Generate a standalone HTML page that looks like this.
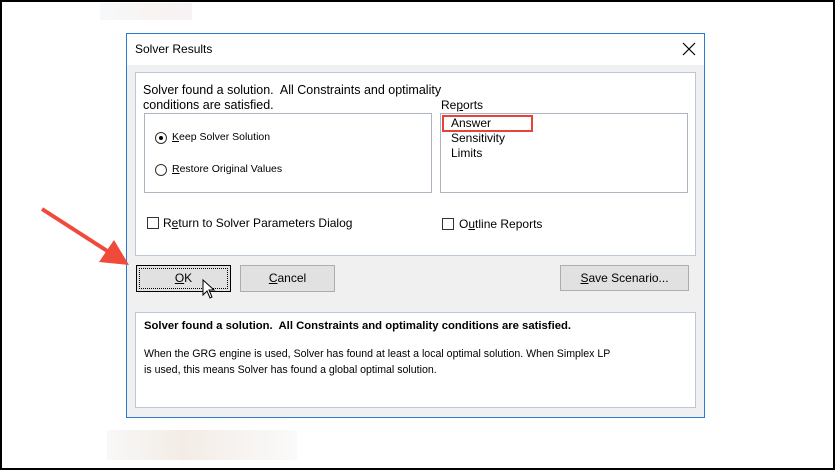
<!DOCTYPE html>
<html><head><style>
*{margin:0;padding:0;box-sizing:border-box}
body{width:835px;height:470px;background:#fff;position:relative;overflow:hidden;font-family:"Liberation Sans",sans-serif;font-size:11.5px;color:#000}
.a{position:absolute}
.frame{left:0;top:0;width:835px;height:470px;border:2px solid #000;border-left-width:2px}
.dlg{left:126px;top:33px;width:579px;height:385px;border:1px solid #2b79d0;background:#f0f0f0}
.title{left:0;top:0;width:577px;height:31px;background:#fff}
.panel{background:#fff;border:1px solid #b9c7d6}
.box{border:1px solid #adb6c0;background:#fff}
.btn{background:#e1e1e1;border:1px solid #adadad;text-align:center;line-height:25px;font-size:12px}
.cb{width:12px;height:12px;border:1px solid #333;background:#fff}
.rd{width:12px;height:12px;border:1px solid #333;border-radius:50%;background:#fff}
u{text-decoration:underline}
</style></head><body>
<div class="a frame"></div>
<div class="a" style="left:100px;top:3px;width:92px;height:17px;background:linear-gradient(90deg,#f6f9fc,#f8f4f2,#f7f2f4)"></div>
<div class="a" style="left:107px;top:430px;width:190px;height:30px;background:linear-gradient(90deg,#f8f8f8,#f3ece6 40%,#f6f1ed 60%,#fafafa)"></div>
<div class="a dlg">
 <div class="a title"></div>
 <div class="a" style="left:8px;top:8px;font-size:12px">Solver Results</div>
 <svg class="a" style="left:555px;top:8px" width="14" height="14"><path d="M1 1L13 13M13 1L1 13" stroke="#000" stroke-width="1.2"/></svg>
 <div class="a panel" style="left:8px;top:38px;width:561px;height:184px"></div>
 <div class="a" style="left:16px;top:49px;line-height:15px;font-size:12.5px">Solver found a solution.&nbsp; All Constraints and optimality<br>conditions are satisfied.</div>
 <div class="a box" style="left:17px;top:79px;width:288px;height:80px"></div>
 <div class="a rd" style="left:28px;top:98px"><div class="a" style="left:3px;top:3px;width:4px;height:4px;border-radius:50%;background:#000"></div></div>
 <div class="a" style="left:45px;top:97px;font-size:10.5px"><u>K</u>eep Solver Solution</div>
 <div class="a rd" style="left:28px;top:130px"></div>
 <div class="a" style="left:45px;top:129px;font-size:10.5px"><u>R</u>estore Original Values</div>
 <div class="a" style="left:314px;top:64px;font-size:12px">Re<u>p</u>orts</div>
 <div class="a box" style="left:313px;top:79px;width:248px;height:80px"></div>
 <div class="a" style="left:315px;top:81px;width:91px;height:17px;border:2px solid #e8433b"></div>
 <div class="a" style="left:324px;top:82px;line-height:15px;font-size:12px">Answer<br>Sensitivity<br>Limits</div>
 <div class="a cb" style="left:20px;top:183px"></div>
 <div class="a" style="left:36px;top:182px;font-size:12px">R<u>e</u>turn to Solver Parameters Dialog</div>
 <div class="a cb" style="left:315px;top:184px"></div>
 <div class="a" style="left:332px;top:183px;font-size:12px">O<u>u</u>tline Reports</div>
 <div class="a btn" style="left:9px;top:231px;width:95px;height:27px;border:1px solid #000"><div style="margin:2px;border:1px dotted #000;line-height:19px"><u>O</u>K</div></div>
 <div class="a btn" style="left:113px;top:231px;width:95px;height:27px"><u>C</u>ancel</div>
 <div class="a btn" style="left:433px;top:231px;width:129px;height:26px"><u>S</u>ave Scenario...</div>
 <div class="a panel" style="left:8px;top:278px;width:561px;height:96px"></div>
 <div class="a" style="left:17px;top:286px;font-size:11.3px;font-weight:bold">Solver found a solution.&nbsp; All Constraints and optimality conditions are satisfied.</div>
 <div class="a" style="left:17px;top:312px;font-size:10.6px;line-height:16px">When the GRG engine is used, Solver has found at least a local optimal solution. When Simplex LP<br>is used, this means Solver has found a global optimal solution.</div>
 <svg class="a" style="left:75px;top:245px" width="16" height="22"><path d="M1 1L1 16L5 12L8 19L10 18L7 11L12 11Z" fill="#fff" stroke="#000"/></svg>
</div>
<svg class="a" style="left:0;top:0" width="140" height="280"><path d="M42 209L112 254" stroke="#f04a3a" stroke-width="4"/><path d="M129 265L99 262L114 240Z" fill="#f04a3a"/></svg>
</body></html>
